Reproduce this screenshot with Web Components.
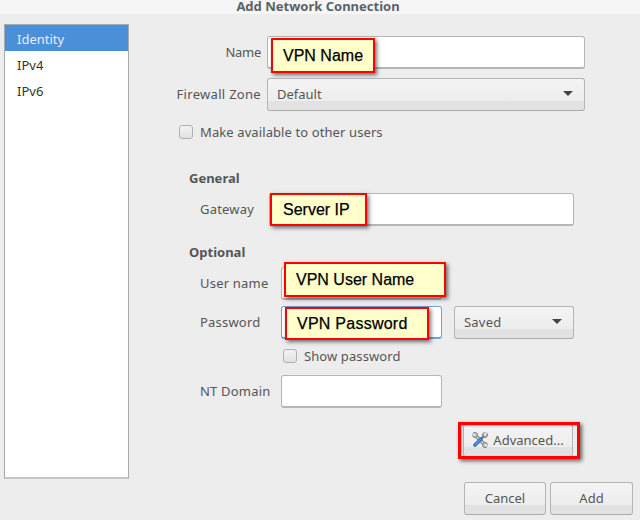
<!DOCTYPE html>
<html>
<head>
<meta charset="utf-8">
<title>Add Network Connection</title>
<style>
html, body { margin: 0; height: 100%; background: #ededed; }
body { width: 640px; height: 520px; overflow: hidden; font: 13px "Noto Sans", sans-serif; color: #555; }
</style>
</head>
<body>
<nm-dialog heading="Add Network Connection">
    <nm-sidebar slot="side" items="Identity,IPv4,IPv6"></nm-sidebar>

    <nm-row label="Name" label-width="87" width="318" top="12" style="letter-spacing:-.3px">
        <nm-entry>
            <nm-callout style="left:3px;top:1px;width:104px;height:35px;padding-left:10px">VPN Name</nm-callout>
        </nm-entry>
    </nm-row>
    <nm-row label="Firewall Zone" label-width="87" width="318" top="9" style="letter-spacing:.3px">
        <nm-combo style="letter-spacing:0">Default</nm-combo>
    </nm-row>
    <nm-check indent="-1" top="12">Make available to other users</nm-check>

    <nm-heading top="28">General</nm-heading>
    <nm-row label="Gateway" label-width="77" indent="12" width="305" top="6">
        <nm-entry>
            <nm-callout style="left:0;top:-1px;width:97px;height:33px;padding-left:11px">Server IP</nm-callout>
        </nm-entry>
    </nm-row>

    <nm-heading top="17">Optional</nm-heading>
    <nm-row label="User name" label-width="89" indent="12" width="161" top="6">
        <nm-entry>
            <nm-callout style="left:2px;top:-6px;width:162px;height:35px;padding-left:10px">VPN User Name</nm-callout>
        </nm-entry>
    </nm-row>
    <nm-row label="Password" label-width="89" indent="12" width="161" top="6">
        <nm-entry focused>
            <nm-callout style="left:3px;top:0;width:144px;height:33px;padding-left:10px;letter-spacing:.25px">VPN Password</nm-callout>
        </nm-entry>
        <nm-combo slot="after" style="width:120px;margin-left:12px;letter-spacing:.2px">Saved</nm-combo>
    </nm-row>
    <nm-check indent="103" top="8">Show password</nm-check>
    <nm-row label="NT Domain" label-width="89" indent="12" width="161" top="10">
        <nm-entry></nm-entry>
    </nm-row>

    <nm-actions top="16" indent="283">
        <nm-button width="110" icon>Advanced...</nm-button>
    </nm-actions>

    <nm-button slot="foot" width="82">Cancel</nm-button>
    <nm-button slot="foot" width="83">Add</nm-button>
</nm-dialog>

<script>
class NmDialog extends HTMLElement {
    constructor() {
        super();
        this.attachShadow({ mode: 'open' });
    }
    connectedCallback() {
        const heading = this.getAttribute('heading') ?? '';
        this.shadowRoot.innerHTML = `
            <style>
            :host { display: flex; flex-direction: column; width: 640px; height: 520px; }
            .title { height: 14px; background: #f6f6f6; text-align: center; font-weight: 700; color: #5a6266; line-height: 13px; white-space: nowrap; padding-right: 4px; flex: none; }
            .body { display: flex; height: 466px; padding: 10px 0 0 4px; box-sizing: border-box; flex: none; }
            .form { display: flex; flex-direction: column; margin-left: 51px; flex: 1; }
            .foot { display: flex; justify-content: flex-end; gap: 4px; padding: 2px 7px 0 0; }
            </style>
            <div class="title">${heading}</div>
            <div class="body">
                <slot name="side"></slot>
                <div class="form"><slot></slot></div>
            </div>
            <div class="foot"><slot name="foot"></slot></div>
        `;
    }
}

class NmSidebar extends HTMLElement {
    constructor() {
        super();
        this.attachShadow({ mode: 'open' });
    }
    connectedCallback() {
        const items = (this.getAttribute('items') ?? '').split(',');
        const rows = items.map((t, i) => `<div class="item${i === 0 ? ' sel' : ''}">${t}</div>`).join('');
        this.shadowRoot.innerHTML = `
            <style>
            :host { display: block; width: 125px; height: 455px; box-sizing: border-box; background: #fff; border: 1px solid #a6abad; border-bottom-width: 2px; border-bottom-color: #c4c6c6; flex: none; }
            .item { height: 26px; line-height: 28px; padding-left: 12px; color: #333; }
            .sel { background: #4a90d9; color: #e6effa; }
            </style>
            ${rows}
        `;
    }
}

class NmRow extends HTMLElement {
    constructor() {
        super();
        this.attachShadow({ mode: 'open' });
    }
    connectedCallback() {
        const label = this.getAttribute('label') ?? '';
        const labelWidth = this.getAttribute('label-width') ?? '87';
        const width = this.getAttribute('width') ?? '300';
        const indent = this.getAttribute('indent') ?? '0';
        const top = this.getAttribute('top') ?? '0';
        const inset = indent === '0' ? 0 : 8;
        this.shadowRoot.innerHTML = `
            <style>
            :host { display: flex; align-items: center; margin-top: ${top}px; margin-left: ${indent}px; letter-spacing: .2px; }
            .label { display: flex; justify-content: ${indent === '0' ? 'flex-end' : 'flex-start'}; width: ${labelWidth}px; padding: 0 6px 2px ${inset}px; box-sizing: border-box; color: #555; flex: none; white-space: nowrap; }
            .field { width: ${width}px; flex: none; }
            </style>
            <div class="label">${label}</div>
            <div class="field"><slot></slot></div>
            <slot name="after"></slot>
        `;
    }
}

class NmEntry extends HTMLElement {
    constructor() {
        super();
        this.attachShadow({ mode: 'open' });
    }
    connectedCallback() {
        const border = this.hasAttribute('focused') ? '#6ea3dc' : '#b4b6b6';
        this.shadowRoot.innerHTML = `
            <style>
            :host { display: block; position: relative; height: 33px; box-sizing: border-box; background: #fff; border: 1px solid ${border}; border-bottom-width: 2px; border-radius: 3px; }
            </style>
            <slot></slot>
        `;
    }
}

class NmCombo extends HTMLElement {
    constructor() {
        super();
        this.attachShadow({ mode: 'open' });
    }
    connectedCallback() {
        this.shadowRoot.innerHTML = `
            <style>
            :host { display: flex; align-items: center; justify-content: space-between; height: 33px; box-sizing: border-box; padding: 0 11px 2px 9px; border: 1px solid #b4b6b6; border-bottom-color: #a8aaaa; border-radius: 3px; background: linear-gradient(#f4f4f4, #ededed 70%, #e2e2e2 71%, #e2e2e2); color: #555; flex: none; }
            .arrow { width: 0; height: 0; border: 5px solid transparent; border-top: 5px solid #444; border-bottom: 0; border-left-width: 5.5px; border-right-width: 5.5px; }
            </style>
            <slot></slot>
            <span class="arrow"></span>
        `;
    }
}

class NmCheck extends HTMLElement {
    constructor() {
        super();
        this.attachShadow({ mode: 'open' });
    }
    connectedCallback() {
        const indent = this.getAttribute('indent') ?? '0';
        const top = this.getAttribute('top') ?? '0';
        this.shadowRoot.innerHTML = `
            <style>
            :host { display: flex; align-items: center; gap: 7px; height: 18px; margin-top: ${top}px; margin-left: ${indent}px; color: #555; letter-spacing: .1px; }
            .box { width: 14px; height: 14px; box-sizing: border-box; border: 1px solid #b0b2b2; border-radius: 3px; background: linear-gradient(#f2f2f2, #e2e2e2); flex: none; }
            </style>
            <span class="box"></span>
            <slot></slot>
        `;
    }
}

class NmHeading extends HTMLElement {
    constructor() {
        super();
        this.attachShadow({ mode: 'open' });
    }
    connectedCallback() {
        const top = this.getAttribute('top') ?? '0';
        this.shadowRoot.innerHTML = `
            <style>
            :host { display: block; margin-top: ${top}px; margin-left: 9px; height: 18px; line-height: 18px; font-weight: 700; color: #555; }
            </style>
            <slot></slot>
        `;
    }
}

class NmActions extends HTMLElement {
    constructor() {
        super();
        this.attachShadow({ mode: 'open' });
    }
    connectedCallback() {
        const top = this.getAttribute('top') ?? '0';
        const indent = this.getAttribute('indent') ?? '0';
        this.shadowRoot.innerHTML = `
            <style>
            :host { display: block; position: relative; width: 110px; margin-top: ${top}px; margin-left: ${indent}px; }
            .ring { position: absolute; left: -5px; top: -2px; right: -7px; bottom: -2px; border: 3px solid #f00; box-shadow: 2px 2px 4px rgba(0,0,0,.6), inset 1px 1px 2px rgba(0,0,0,.3); }
            </style>
            <slot></slot>
            <div class="ring"></div>
        `;
    }
}

class NmButton extends HTMLElement {
    constructor() {
        super();
        this.attachShadow({ mode: 'open' });
    }
    connectedCallback() {
        const width = this.getAttribute('width') ?? '80';
        // wrench crossed with a screwdriver, blue handle at the lower left
        const icon = this.hasAttribute('icon') ? `
            <svg width="16" height="16" viewBox="0 0 16 16">
                <path d="M3.5 3.5 L12.5 12.5" stroke="#757b7e" stroke-width="3.4"/>
                <path d="M3.5 3.5 L12.5 12.5" stroke="#d8dbdc" stroke-width="1.5"/>
                <circle cx="3" cy="3" r="2.5" fill="#c9cdce" stroke="#757b7e"/>
                <circle cx="13" cy="13" r="2.5" fill="#c9cdce" stroke="#757b7e"/>
                <circle cx="13" cy="3" r="2.5" fill="#c9cdce" stroke="#757b7e"/>
                <path d="M.5 .5 L3 3 L.5 4 Z M15.5 15.5 L13 13 L15.5 12 Z M15.5 .5 L13 3 L12 .5 Z" fill="#eeeeee"/>
                <path d="M12 4 L8 8" stroke="#757b7e" stroke-width="2.4"/>
                <path d="M8.8 7.2 L3 13" stroke="#2f6fb8" stroke-width="3.6" stroke-linecap="round"/>
                <path d="M8.4 7.6 L3.4 12.6" stroke="#5b9de0" stroke-width="1.4" stroke-linecap="round"/>
            </svg>` : '';
        this.shadowRoot.innerHTML = `
            <style>
            :host { display: flex; align-items: center; justify-content: center; gap: 5px; width: ${width}px; height: 33px; box-sizing: border-box; padding-bottom: 2px; border: 1px solid #b4b6b6; border-bottom-color: #a8aaaa; border-radius: 3px; background: linear-gradient(#f4f4f4, #ededed 70%, #e2e2e2 71%, #e2e2e2); color: #555; }
            svg { flex: none; }
            </style>
            ${icon}<slot></slot>
        `;
    }
}

class NmCallout extends HTMLElement {
    constructor() {
        super();
        this.attachShadow({ mode: 'open' });
    }
    connectedCallback() {
        this.shadowRoot.innerHTML = `
            <style>
            :host { display: flex; align-items: center; position: absolute; box-sizing: border-box; background: #ffffcc; border: 2px solid #f00; box-shadow: 2px 2px 4px rgba(0,0,0,.55); font: 16px "Liberation Sans", Arial, sans-serif; color: #000; -webkit-text-stroke: .25px #000; white-space: nowrap; letter-spacing: 0; }
            </style>
            <slot></slot>
        `;
    }
}

customElements.define('nm-dialog', NmDialog);
customElements.define('nm-sidebar', NmSidebar);
customElements.define('nm-row', NmRow);
customElements.define('nm-entry', NmEntry);
customElements.define('nm-combo', NmCombo);
customElements.define('nm-check', NmCheck);
customElements.define('nm-heading', NmHeading);
customElements.define('nm-actions', NmActions);
customElements.define('nm-button', NmButton);
customElements.define('nm-callout', NmCallout);
</script>
</body>
</html>
